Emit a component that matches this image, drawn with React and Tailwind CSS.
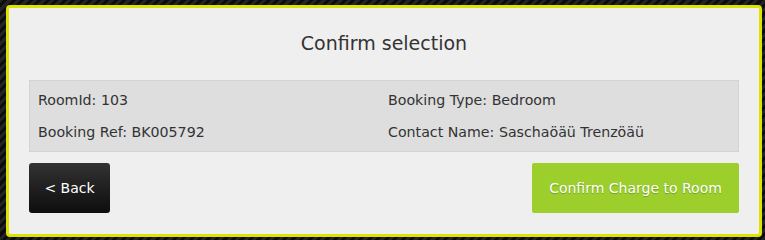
const details = [
  { label: 'RoomId', value: '103' },
  { label: 'Booking Type', value: 'Bedroom' },
  { label: 'Booking Ref', value: 'BK005792' },
  { label: 'Contact Name', value: 'Saschaöäü Trenzöäü' },
];

const App = () => {
  return (
    <div
      className="h-[240px] w-[765px] pt-[5px] pl-[6px] pr-[3px] bg-[repeating-linear-gradient(-45deg,#232323_0px,#232323_3px,#0c0c0c_3px,#0c0c0c_6px)]"
      style={{ fontFamily: '"DejaVu Sans", Verdana, sans-serif' }}
    >
      <div className="h-[232px] rounded-[4px] border-[3px] border-[#dfe300] bg-[#efefef] px-5 pb-5">
        {/* Title */}
        <h2 className="h-[72px] pt-[20px] text-center text-[19px] leading-[30px] text-[#333]">
          Confirm selection
        </h2>

        {/* Details box */}
        <div className="grid h-[72px] grid-cols-2 border border-[#d3d3d3] bg-[#dedede] pt-[4px] pb-[2px]">
          {details.map((d, i) => (
            <div
              key={d.label}
              className={`flex h-[32px] items-center text-[14.2px] text-[#333] ${i % 2 === 0 ? 'pl-[8px]' : 'pl-[4px]'}`}
            >
              {d.label}: {d.value}
            </div>
          ))}
        </div>

        {/* Actions */}
        <div className="mt-[11px] flex justify-between">
          <button className="h-[50px] w-[81px] rounded-[3px] bg-gradient-to-b from-[#333] to-[#0e0e0e] text-[14px] text-white">
            &lt; Back
          </button>
          <button className="h-[50px] w-[207px] rounded-[2px] bg-[#9ccf2c] text-[14px] text-white [text-shadow:0_1px_1px_rgba(0,0,0,0.25)]">
            Confirm Charge to Room
          </button>
        </div>
      </div>
    </div>
  );
};

export default App;
